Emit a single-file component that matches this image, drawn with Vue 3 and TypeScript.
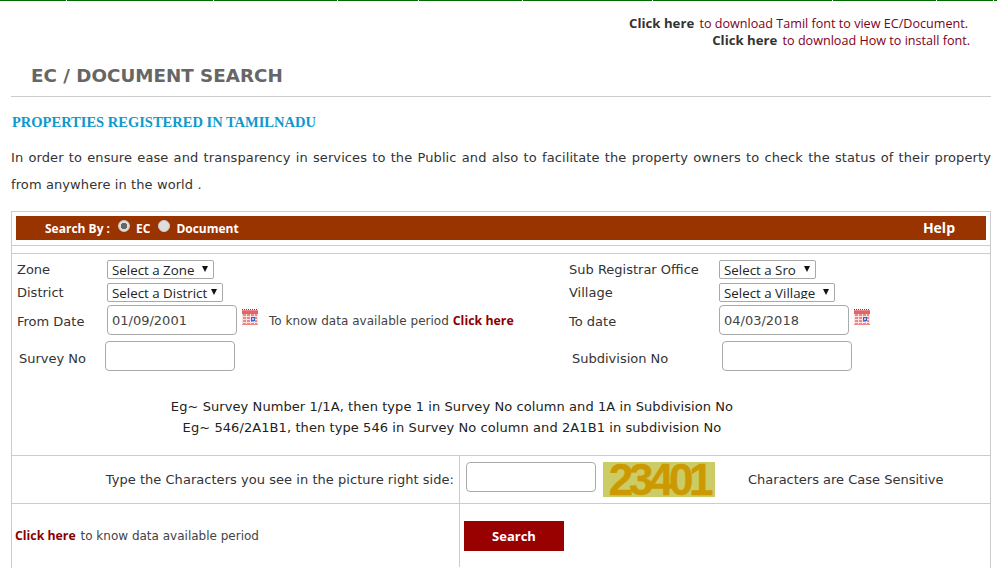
<script setup lang="ts">
const ticks: number[] = [66, 213, 337, 418, 522, 652, 832, 936, 993]
</script>

<template>
  <div class="page">
    <div class="topbar">
      <i v-for="t in ticks" :key="t" class="tick" :style="{ left: t + 'px' }"></i>
    </div>
    <div class="links">
      <div class="l1"><b>Click here</b> <span>to download Tamil font to view EC/Document.</span></div>
      <div class="l2"><b>Click here</b> <span>to download How to install font.</span></div>
    </div>
    <h1>EC / DOCUMENT SEARCH</h1>
    <h2>PROPERTIES REGISTERED IN TAMILNADU</h2>
    <p class="intro">In order to ensure ease and transparency in services to the Public and also to facilitate the property owners to check the status of their property from anywhere in the world .</p>
    <div class="box">
      <div class="bar">
        <div class="by">
          <b>Search By :</b>
          <input type="radio" name="t" checked /><b>EC</b>
          <input type="radio" name="t" /><b>Document</b>
        </div>
        <b class="help">Help</b>
      </div>
      <div class="form">
        <div class="col left">
          <div class="row r1"><label>Zone</label><span class="sel w1"><select><option>Select a Zone</option></select></span></div>
          <div class="row r2"><label>District</label><span class="sel w2"><select><option>Select a District</option></select></span></div>
          <div class="row r3"><label>From Date</label><input class="txt" value="01/09/2001" />
            <svg class="cal" viewBox="0 0 16 16">
              <rect y="1" width="16" height="15" fill="#e88"/>
              <path d="M0 .5h16" stroke="#a33" stroke-dasharray="1 1"/>
              <rect y="2" width="16" height="3" fill="#d66"/>
              <path d="M.5 5v10M4.500 5v10M8.500 5v10M12.500 5v10M15.500 5v10M0 7.500h16M0 10.500h16M0 13.500h16" stroke="#fff" opacity=".75"/>
              <rect x="9.500" y="8.500" width="3" height="3" fill="#bcd" stroke="#36c"/>
            </svg>
            <span class="know">To know data available period <b>Click here</b></span>
          </div>
          <div class="row r4"><label>Survey No</label><input class="txt" /></div>
        </div>
        <div class="col right">
          <div class="row r1"><label>Sub Registrar Office</label><span class="sel w3"><select><option>Select a Sro</option></select></span></div>
          <div class="row r2"><label>Village</label><span class="sel w2"><select><option>Select a Village</option></select></span></div>
          <div class="row r3"><label>To date</label><input class="txt" value="04/03/2018" />
            <svg class="cal" viewBox="0 0 16 16">
              <rect y="1" width="16" height="15" fill="#e88"/>
              <path d="M0 .5h16" stroke="#a33" stroke-dasharray="1 1"/>
              <rect y="2" width="16" height="3" fill="#d66"/>
              <path d="M.5 5v10M4.500 5v10M8.500 5v10M12.500 5v10M15.500 5v10M0 7.500h16M0 10.500h16M0 13.500h16" stroke="#fff" opacity=".75"/>
              <rect x="9.500" y="8.500" width="3" height="3" fill="#bcd" stroke="#36c"/>
            </svg>
          </div>
          <div class="row r4"><label>Subdivision No</label><input class="txt" /></div>
        </div>
      </div>
      <div class="eg">
        <div>Eg~ Survey Number 1/1A, then type 1 in Survey No column and 1A in Subdivision No</div>
        <div>Eg~ 546/2A1B1, then type 546 in Survey No column and 2A1B1 in subdivision No</div>
      </div>
      <div class="grid">
        <div class="cell c1">Type the Characters you see in the picture right side:</div>
        <div class="cell c2">
          <input class="txt" />
          <div class="captcha">23401</div>
          <span class="sens">Characters are Case Sensitive</span>
        </div>
        <div class="cell c3"><b>Click here</b> to know data available period</div>
        <div class="cell c4"><button>Search</button></div>
      </div>
    </div>
  </div>
</template>

<style>
html, body { margin: 0; background: #fff; overflow: hidden; }
</style>
<style scoped>
.page { width: 997px; height: 568px; overflow: hidden; font-family: "DejaVu Sans", sans-serif; color: #333; font-size: 13px; box-sizing: border-box; padding: 0 6px 0 11px; position: relative; }
.topbar { position: absolute; left: 0; top: 0; width: 997px; height: 1px; background: #006b00; }
.tick { position: absolute; top: 0; width: 1px; height: 1px; background: #fff; }
.links { text-align: right; padding-top: 15px; font-family: "Open Sans", sans-serif; font-size: 12.6px; line-height: 17px; color: #800020; }
.links b { color: #333; font-size: 13.2px; margin-right: 2px; }
.l1 { padding-right: 23px; }
.l2 { padding-right: 21px; }
h1 { margin: 15px 0 0; padding: 0 0 8px 20px; font-size: 18.3px; line-height: 24px; color: #666; border-bottom: 1px solid #ccc; }
h2 { margin: 16px 0 0 1px; font-family: "Liberation Serif", serif; font-size: 14.5px; line-height: 18px; color: #0e99cc; }
.intro { margin: 13px 0 0; line-height: 27px; text-align: justify; letter-spacing: .1px; }
.box { margin-top: 13px; border: 1px solid #ccc; height: 400px; }
.bar { margin: 4px 4px 0; height: 24px; background: #993300; display: flex; align-items: center; justify-content: space-between; color: #fff; padding: 0 31px 0 29px; font: 12px "Open Sans", sans-serif; }
.by { display: flex; align-items: center; }
.by input { appearance: none; margin: 0 6px 5px 8px; width: 12px; height: 12px; border-radius: 50%; background: #ddd; border: 1px solid #ccc; box-sizing: border-box; }
.by input:checked { background: radial-gradient(circle, #666 0 3px, #ddd 3.5px); }
.help { font-size: 14px; margin-top: -2px; }
.form { margin-top: 5px; padding-top: 8px; border-top: 1px solid #ccc; display: flex; box-shadow: inset 0 7px 0 #fff, inset 0 8px 0 #ccc; }
.col { flex: none; box-sizing: border-box; }
.left { width: 557px; padding-left: 5px; }
.row { display: flex; align-items: center; }
.row label { width: 90px; flex: none; }
.right .row label { width: 150px; }
.r1 { padding-top: 6px; }
.r2 { margin-top: 4px; }
.r3 { margin-top: 3px; }
.r3 label { padding-top: 2px; }
.r4 { margin-top: 6px; }
.left .r4 label { width: 86px; padding-left: 2px; padding-top: 4px; }
.right .r4 label { width: 150px; padding-left: 3px; padding-top: 4px; }
.sel { position: relative; display: block; height: 19px; flex: none; }
.sel::after { content: ""; position: absolute; right: 6px; top: 6px; border-left: 3.500px solid transparent; border-right: 3.500px solid transparent; border-top: 6px solid #111; pointer-events: none; }
.w1 { width: 107px; }
.w2 { width: 116px; }
.w3 { width: 97px; }
select { appearance: none; display: block; width: 100%; height: 19px; box-sizing: border-box; font: 13.33px "Open Sans", sans-serif; background: #fff; border: 1px solid #a9a9a9; border-radius: 2px; padding: 0 0 2px 4px; color: #222; }
.txt { width: 130px; height: 30px; box-sizing: border-box; border: 1px solid #aaa; border-radius: 4px; padding: 0 4px; font: 13px "DejaVu Sans", sans-serif; color: #444; background: #fff; }
.cal { width: 16px; height: 16px; margin: -7px 0 0 5px; flex: none; }
.know { margin-left: 11px; font-size: 12px; color: #444; white-space: nowrap; letter-spacing: .03px; }
.know b, .c3 b { font-family: "Open Sans", sans-serif; font-size: 12.3px; color: #8b0000; }
.eg { text-align: center; margin: 25px 98px 0 0; line-height: 21px; color: #222; white-space: nowrap; letter-spacing: .08px; }
.grid { margin-top: 17px; display: grid; grid-template-columns: 448px 1fr; border-top: 1px solid #ccc; }
.cell { box-sizing: border-box; }
.c1, .c2 { height: 47px; display: flex; }
.c1 { align-items: center; justify-content: flex-end; padding-right: 5px; border-right: 1px solid #ccc; letter-spacing: .04px; }
.c2 { align-items: flex-start; padding: 6px 0 0 6px; }
.captcha { width: 112px; height: 35px; margin-left: 7px; background: #cccc66; color: #cc9900; font: 700 44px/35px "Liberation Sans", sans-serif; text-align: center; letter-spacing: -4.4px; flex: none; -webkit-text-stroke: .4px #cc9900; }
.sens { margin: 10px 0 0 33px; white-space: nowrap; }
.c3, .c4 { border-top: 1px solid #ccc; height: 64px; }
.c3 { padding: 23px 0 0 3px; border-right: 1px solid #ccc; font-size: 12px; color: #444; }
.c3 b { margin-right: 1px; }
.c4 { padding: 17px 0 0 4px; }
button { display: block; width: 100px; height: 30px; border: 0; background: #990000; color: #fff; font: 700 13px "Open Sans", sans-serif; }
</style>
